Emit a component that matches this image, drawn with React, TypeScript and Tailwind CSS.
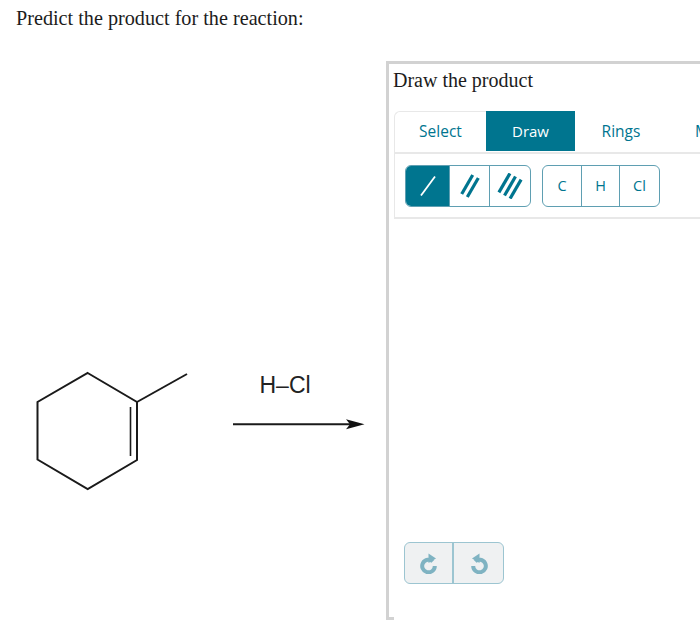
import React from 'react';

const Redo = () => (
  <svg width="20" height="22" viewBox="0 0 20 22" fill="none">
    <path d="M13.8 9.4 A6.3 6.3 0 1 0 15.8 14" stroke="#7fb3c2" strokeWidth="4" />
    <path d="M9.5 1.5 L17 6.6 L9.5 11 Z" fill="#7fb3c2" />
  </svg>
);

const Undo = () => (
  <svg width="20" height="22" viewBox="0 0 20 22" fill="none">
    <path d="M6.2 9.4 A6.3 6.3 0 1 1 4.2 14" stroke="#7fb3c2" strokeWidth="4" />
    <path d="M10.5 1.5 L3 6.6 L10.5 11 Z" fill="#7fb3c2" />
  </svg>
);

const BondIcon = ({ count, color }: { count: number; color: string }) => {
  const offsets = count === 1 ? [0] : count === 2 ? [-2.8, 2.8] : [-5.6, 0, 5.6];
  return (
    <svg width="26" height="26" viewBox="0 0 26 26">
      {offsets.map((o) => (
        <line
          key={o}
          x1={(count === 1 ? 6 : 7.5) + o}
          y1={(count === 1 ? 22.5 : 22.5) + o * 0.55}
          x2={(count === 1 ? 20 : 18.5) + o}
          y2={(count === 1 ? 3.5 : 3.5) + o * 0.55}
          stroke={color}
          strokeWidth={count === 1 ? 1.8 : 3.2}
        />
      ))}
    </svg>
  );
};

const Reaction = () => (
  <svg width="386" height="572" viewBox="0 61 386 572" className="block shrink-0">
    <g fill="none" stroke="#1a1a1a" strokeWidth="2">
      <path d="M87.7 373 L137 402 L137 460 L87.7 489 L37.5 459.5 L37.5 402 Z" />
      <path d="M137 402 L187 374" />
      <path d="M130.5 407 L130.5 456" strokeWidth="1.6" />
      <path d="M233 424.3 L350 424.3" />
    </g>
    <path d="M364.5 424.3 L346 419.3 L350 424.3 L346 429.3 Z" fill="#111" />
    <text x="259.5" y="393" fontFamily="'Liberation Sans', sans-serif" fontSize="23" fill="#222">H–Cl</text>
  </svg>
);

export default function App() {
  return (
    <div className="w-[700px] h-[633px] overflow-hidden bg-white font-['Liberation_Serif',serif]">
      <div className="h-[61px] pl-4 pt-[5px] text-[20.2px] leading-[26px] text-[#1c1c1c]">
        Predict the product for the reaction:
      </div>
      <div className="flex">
        <Reaction />
        <div className="w-[314px] h-[559px] border-l-[3px] border-t-[3px] border-[#d2d2d2] flex flex-col relative">
          <div className="pl-[4px] pt-[2px] h-[47px] text-[20px] leading-[28px] text-[#1c1c1c]">Draw the product</div>
          <div className="ml-[5px] flex flex-col font-['Open_Sans',sans-serif] text-[#00758f]">
            <div className="flex h-[43px] border-b-2 border-[#e8e8e8] text-[15.5px]">
              <div className="w-[92px] shrink-0 border-l border-t border-[#e8e8e8] rounded-tl-md flex items-center justify-center">Select</div>
              <div className="w-[89px] shrink-0 h-[40px] bg-[#00758f] text-white text-[15px] flex items-center justify-center">Draw</div>
              <div className="w-[92px] shrink-0 flex items-center justify-center">Rings</div>
              <div className="w-[92px] shrink-0 pl-[28px] flex items-center">More</div>
            </div>
            <div className="h-[65px] border-l border-b-2 border-[#e8e8e8] pl-[10px] pt-[11px] flex gap-[11px]">
              <div className="flex h-[42px] w-[126px] border border-[#5f9fb2] rounded-md overflow-hidden">
                <div className="w-[43px] bg-[#00758f] flex items-center justify-center"><BondIcon count={1} color="#fff" /></div>
                <div className="w-[41px] border-x border-[#5f9fb2] flex items-center justify-center"><BondIcon count={2} color="#00758f" /></div>
                <div className="flex-1 flex items-center justify-center"><BondIcon count={3} color="#00758f" /></div>
              </div>
              <div className="flex h-[42px] w-[118px] border border-[#5f9fb2] rounded-md text-[14.5px]">
                <div className="w-[39px] border-r border-[#5f9fb2] flex items-center justify-center">C</div>
                <div className="w-[38px] border-r border-[#5f9fb2] flex items-center justify-center">H</div>
                <div className="flex-1 flex items-center justify-center">Cl</div>
              </div>
            </div>
          </div>
          <div className="flex-1" />
          <div className="ml-[15px] mb-[36px] flex h-[42px] w-[100px] bg-[#eff1f2] border border-[#9cc5d1] rounded-md">
            <div className="w-[49px] border-r-2 border-[#9cc5d1] flex items-center justify-center"><Redo /></div>
            <div className="flex-1 flex items-center justify-center"><Undo /></div>
          </div>
          <div className="absolute left-0 bottom-0 w-[5px] h-[3px] bg-[#d2d2d2]" />
        </div>
      </div>
    </div>
  );
}
